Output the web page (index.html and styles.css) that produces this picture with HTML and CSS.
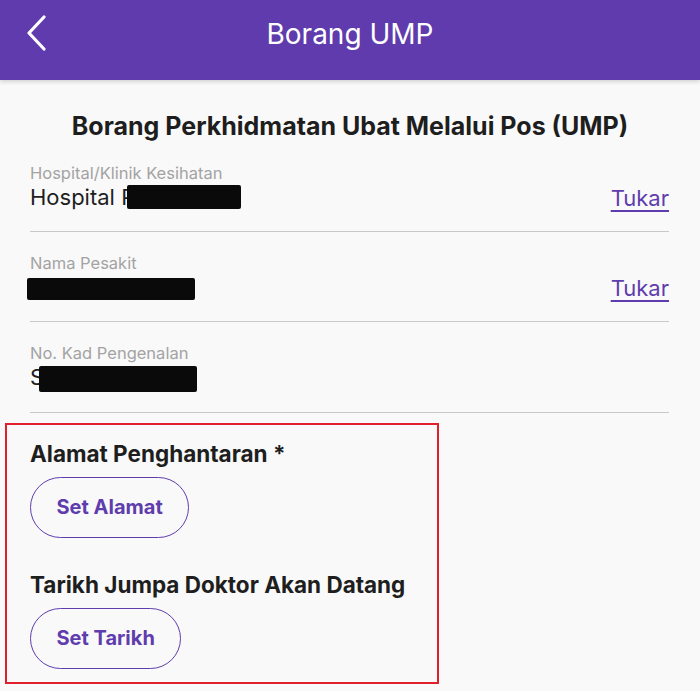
FILE: index.html
```html
<!DOCTYPE html>
<html lang="ms">
<head>
    <meta charset="UTF-8">
    <meta name="viewport" content="width=device-width, initial-scale=1.0">
    <title>Borang UMP</title>
    <link rel="stylesheet" href="styles.css">
</head>
<body>
    <!-- Top bar -->
    <header class="app-bar">
        <button class="back-button" aria-label="Kembali">
            <svg width="22" height="36" viewBox="0 0 22 36">
                <path d="M19 2 L4 18 L19 34" fill="none" stroke="#ffffff" stroke-width="3.2" stroke-linecap="round" stroke-linejoin="round"/>
            </svg>
        </button>
        <h1 class="app-title">Borang UMP</h1>
    </header>

    <main class="form-page">
        <h2 class="form-title">Borang Perkhidmatan Ubat Melalui Pos (UMP)</h2>

        <div class="fields">
            <div class="field">
                <div class="field-info">
                    <span class="field-label">Hospital/Klinik Kesihatan</span>
                    <span class="field-value">Hospital P<span class="redact redact-hospital"></span></span>
                </div>
                <a href="#" class="change-link">Tukar</a>
            </div>

            <div class="field">
                <div class="field-info">
                    <span class="field-label">Nama Pesakit</span>
                    <span class="field-value"><span class="redact redact-name"></span></span>
                </div>
                <a href="#" class="change-link">Tukar</a>
            </div>

            <div class="field">
                <div class="field-info">
                    <span class="field-label">No. Kad Pengenalan</span>
                    <span class="field-value">S<span class="redact redact-ic"></span></span>
                </div>
            </div>
        </div>

        <!-- Highlighted section -->
        <section class="required-box">
            <h3 class="section-heading">Alamat Penghantaran *</h3>
            <button class="outline-button">Set Alamat</button>

            <h3 class="section-heading second">Tarikh Jumpa Doktor Akan Datang</h3>
            <button class="outline-button">Set Tarikh</button>
        </section>
    </main>
</body>
</html>
```

FILE: styles.css
```css
body {
    margin: 0;
    font-family: Inter, "Noto Sans", sans-serif;
    background: #f9f9f9;
    color: #1e1e1e;
}

/* Top bar */
.app-bar {
    height: 80px;
    background: #5f3bad;
    display: flex;
    align-items: flex-start;
    justify-content: center;
    position: relative;
    box-shadow: 0 2px 4px rgba(0, 0, 0, 0.15);
}

.back-button {
    position: absolute;
    left: 25px;
    top: 15px;
    background: none;
    border: none;
    padding: 0;
    cursor: pointer;
}

.app-title {
    margin: 0;
    padding-top: 16px;
    font-size: 28px;
    line-height: 36px;
    font-weight: 400;
    color: #ffffff;
}

/* Form */
.form-title {
    margin: 0;
    padding: 31px 0 0.5px;
    text-align: center;
    font-size: 25px;
    line-height: 30px;
    font-weight: 700;
    color: #1e1e1e;
}

.fields {
    padding: 0 31px 0 30px;
}

.field {
    display: flex;
    justify-content: space-between;
    align-items: flex-end;
    padding: 21px 0 20px;
    border-bottom: 1px solid #c9c9c9;
}

.field-info {
    display: flex;
    flex-direction: column;
}

.field-label {
    font-size: 16.5px;
    line-height: 20px;
    color: #a3a3a3;
}

.field-value {
    font-size: 22px;
    line-height: 28px;
    color: #1e1e1e;
    white-space: nowrap;
}

.redact {
    display: inline-block;
    background: #0a0a0a;
    vertical-align: middle;
    border-radius: 2px;
}

.redact-hospital {
    width: 114px;
    height: 24px;
    margin-left: -8px;
    margin-top: -4px;
}

.redact-name {
    width: 168px;
    height: 22px;
    margin-left: -3px;
}

.redact-ic {
    width: 158px;
    height: 26px;
    margin-left: -5px;
}

.change-link {
    font-size: 22px;
    line-height: 28px;
    color: #5f3dad;
    text-decoration: underline;
    text-underline-offset: 4px;
    margin-bottom: -1px;
}

/* Highlighted box */
.required-box {
    box-sizing: border-box;
    margin: 10px 0 0 5px;
    width: 434px;
    border: 2px solid #e0202c;
    padding: 15px 0 13px 23px;
    display: flex;
    flex-direction: column;
    align-items: flex-start;
}

.section-heading {
    margin: 0;
    font-size: 22.5px;
    line-height: 28px;
    font-weight: 700;
    color: #1e1e1e;
}

.section-heading.second {
    margin-top: 33px;
}

.outline-button {
    margin-top: 9px;
    height: 61px;
    padding: 0 25.5px;
    border: 1.5px solid #5f3dad;
    border-radius: 31px;
    background: transparent;
    font-family: Inter, "Noto Sans", sans-serif;
    font-size: 20px;
    font-weight: 700;
    color: #5f3dad;
    cursor: pointer;
}
```
